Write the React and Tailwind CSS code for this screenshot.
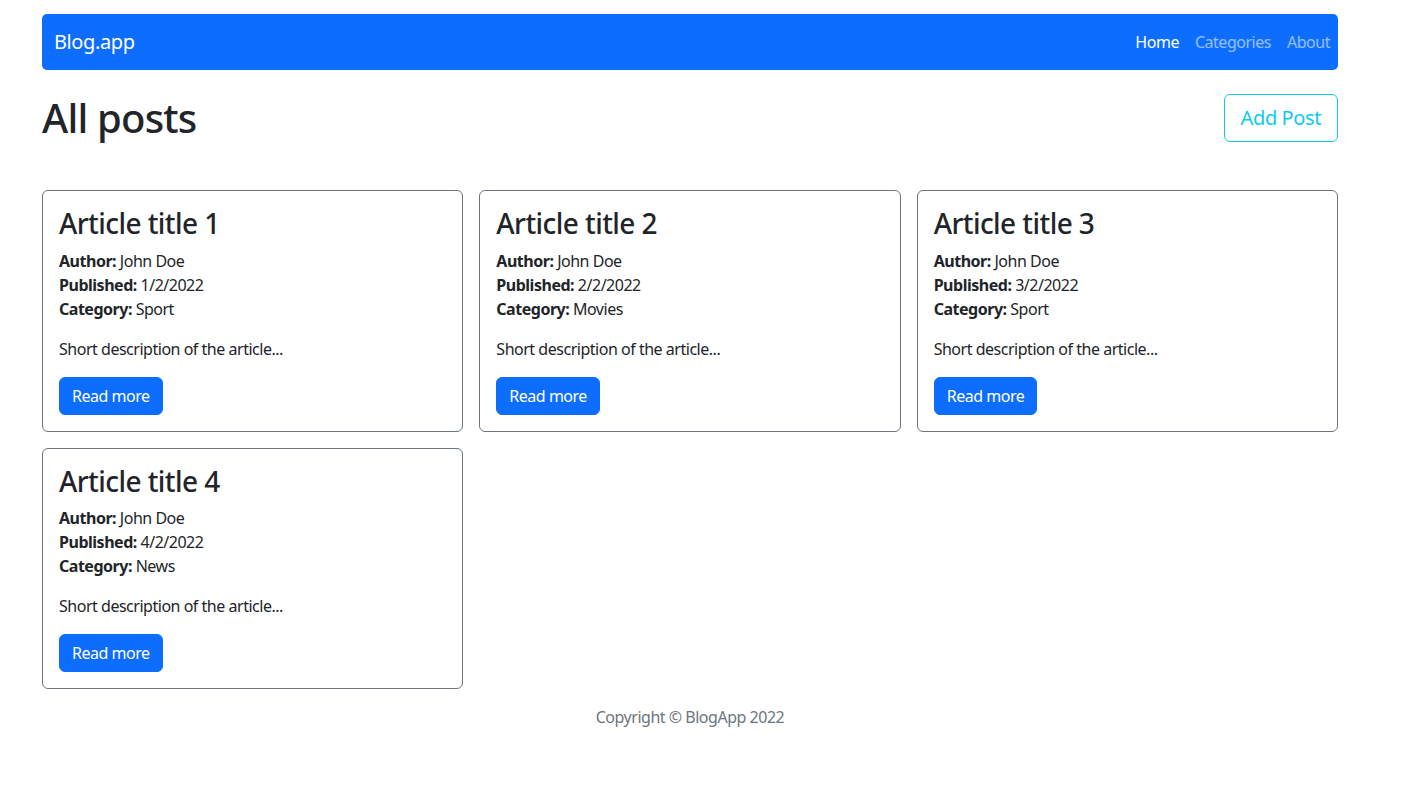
import React from "react";

const posts = [
  { id: 1, title: "Article title 1", author: "John Doe", published: "1/2/2022", category: "Sport" },
  { id: 2, title: "Article title 2", author: "John Doe", published: "2/2/2022", category: "Movies" },
  { id: 3, title: "Article title 3", author: "John Doe", published: "3/2/2022", category: "Sport" },
  { id: 4, title: "Article title 4", author: "John Doe", published: "4/2/2022", category: "News" },
];

function PostCard({ post }) {
  return (
    <div className="border border-[#6c757d] rounded-md bg-white">
      <div className="p-4">
        <h3 className="text-[28px] leading-[1.2] font-medium tracking-[-0.02em] text-[#212529] mb-2">
          {post.title}
        </h3>
        <p className="mb-4 leading-6">
          <b className="font-bold">Author:</b> {post.author}
          <br />
          <b className="font-bold">Published:</b> {post.published}
          <br />
          <b className="font-bold">Category:</b> {post.category}
        </p>
        <p className="mb-4 leading-6">Short description of the article...</p>
        <button className="bg-[#0d6efd] text-white rounded-md px-3 py-[6px] leading-6 border border-[#0d6efd]">
          Read more
        </button>
      </div>
    </div>
  );
}

export default function App() {
  return (
    <div
      className="min-h-screen bg-white text-[#212529] text-base tracking-[-0.03em]"
      style={{ fontFamily: '"Noto Sans", "Liberation Sans", sans-serif' }}
    >
      <div className="ml-[42px] w-[1296px] pt-[14px]">
        <nav className="h-14 bg-[#0d6efd] rounded-[5px] flex items-center justify-between pl-3">
          <a className="text-white text-xl leading-[30px] tracking-[-0.02em]">Blog.app</a>
          <ul className="flex">
            <li><a className="block px-2 text-white leading-6">Home</a></li>
            <li><a className="block px-2 text-white/55 leading-6">Categories</a></li>
            <li><a className="block px-2 text-white/55 leading-6">About</a></li>
          </ul>
        </nav>

        <div className="mt-6 flex items-center justify-between">
          <h1 className="text-[40px] leading-[48px] font-medium tracking-[-0.02em]">All posts</h1>
          <button className="h-12 px-4 text-xl leading-[30px] tracking-[-0.02em] text-[#0dcaf0] border border-[#0dcaf0] rounded-[6px]">
            Add Post
          </button>
        </div>

        <div className="mt-12 grid grid-cols-3 gap-4">
          {posts.map((post) => (
            <PostCard key={post.id} post={post} />
          ))}
        </div>

        <footer className="mt-4 text-center text-[#6c757d] leading-6">Copyright © BlogApp 2022</footer>
      </div>
    </div>
  );
}
